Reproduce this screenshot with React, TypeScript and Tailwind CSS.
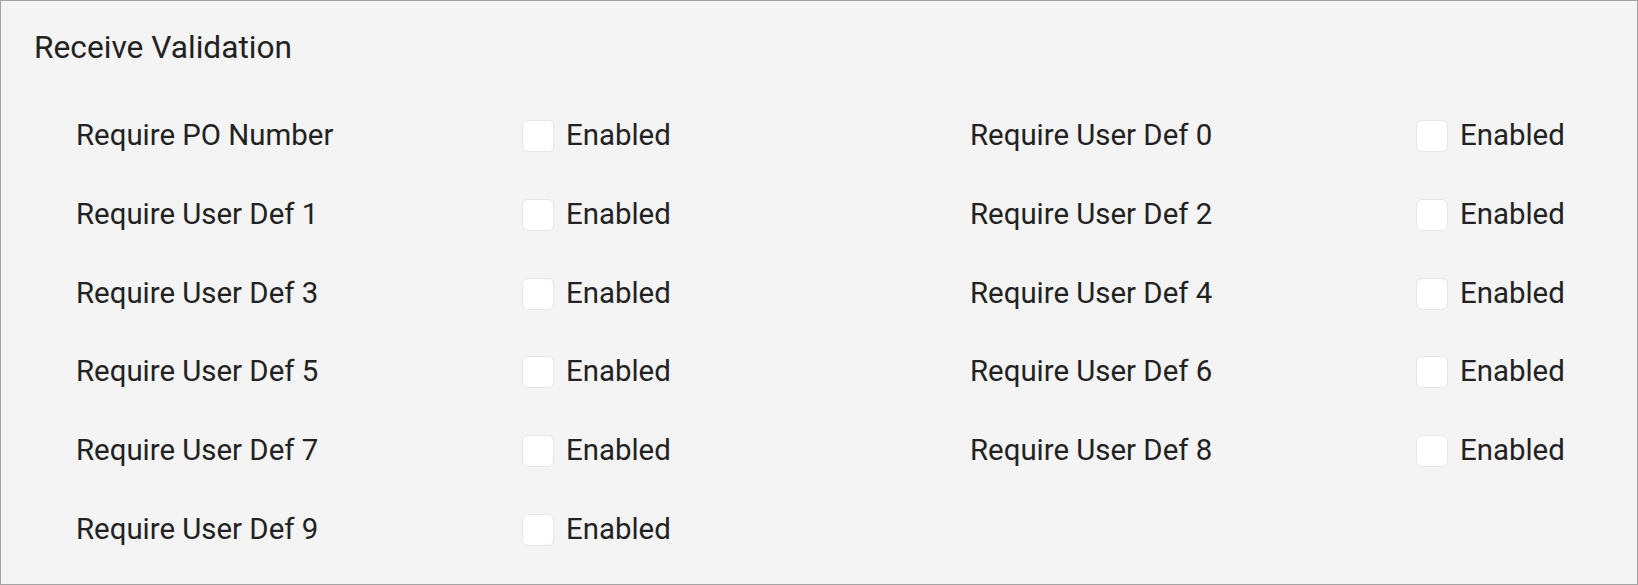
const left = ['Require PO Number', 'Require User Def 1', 'Require User Def 3', 'Require User Def 5', 'Require User Def 7', 'Require User Def 9'];
const right = ['Require User Def 0', 'Require User Def 2', 'Require User Def 4', 'Require User Def 6', 'Require User Def 8'];

function Row({ label }: { label: string }) {
    return (
        <div className="flex items-center h-[78.7px]">
            <span className="w-[446px] shrink-0 pb-[2px]">{label}</span>
            <span className="w-[32px] h-[32px] rounded-[6px] bg-white border border-[#e6e6e6] shrink-0" />
            <span className="ml-[12px] pb-[2px]">Enabled</span>
        </div>
    );
}

export default function App() {
    return (
        <div
            className="w-[1638px] h-[585px] bg-[#f4f4f4] border border-[#a3a3a3] text-[#222222] overflow-hidden"
            style={{ fontFamily: 'Roboto, "Liberation Sans", sans-serif' }}
        >
            <h2 className="pl-[33px] pt-[28px] text-[31.7px] leading-[38px]">Receive Validation</h2>
            {/* Options Grid */}
            <div className="grid grid-cols-[894px_1fr] pl-[75px] pt-[30px] text-[29.4px] leading-[36px]">
                <div className="flex flex-col">
                    {left.map((l) => (
                        <Row key={l} label={l} />
                    ))}
                </div>
                <div className="flex flex-col">
                    {right.map((l) => (
                        <Row key={l} label={l} />
                    ))}
                </div>
            </div>
        </div>
    );
}
